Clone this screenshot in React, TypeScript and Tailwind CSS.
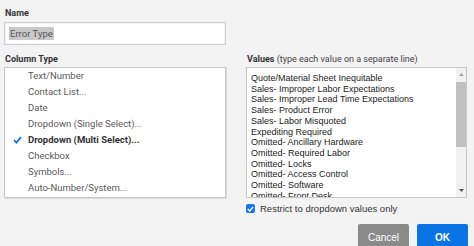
const columnTypes = [
  "Text/Number",
  "Contact List...",
  "Date",
  "Dropdown (Single Select)...",
  "Dropdown (Multi Select)...",
  "Checkbox",
  "Symbols...",
  "Auto-Number/System...",
];

const values = [
  "Quote/Material Sheet Inequitable",
  "Sales- Improper Labor Expectations",
  "Sales- Improper Lead Time Expectations",
  "Sales- Product Error",
  "Sales- Labor Misquoted",
  "Expediting Required",
  "Omitted- Ancillary Hardware",
  "Omitted- Required Labor",
  "Omitted- Locks",
  "Omitted- Access Control",
  "Omitted- Software",
  "Omitted- Front Desk",
];

const selected = "Dropdown (Multi Select)...";

export default function App() {
  return (
    <div className="w-[474px] h-[246px] overflow-hidden bg-[#f3f3f3] pl-[4px] pt-[7px] font-['Roboto',sans-serif]">
      <div className="pl-[1px] text-[9px] font-bold leading-[12px] text-[#333]">Name</div>
      <div className="mt-[3px] flex h-[23px] w-[222px] items-center border border-[#cfcfcf] bg-white pl-[4px] shadow-[inset_0_0_0_1px_#f4f4f4]">
        <span className="bg-[#c9c9c9] px-[1px] text-[9.5px] leading-[13px] text-[#555]">Error Type</span>
      </div>

      <div className="mt-[8px] flex gap-[20px]">
        {/* left column */}
        <div className="w-[222px]">
          <div className="pl-[1px] text-[9px] font-bold leading-[12px] text-[#333]">Column Type</div>
          <ul className="mt-[2px] h-[131px] border border-[#c8c8c8] bg-white shadow-[1px_1px_0_#dcdcdc]">
            {columnTypes.map((t) => {
              const on = t === selected;
              return (
                <li key={t} className="flex h-[16px] items-center text-[9.5px] leading-[16px]">
                  <span className="flex w-[23px] justify-center">
                    {on && (
                      <svg width="9" height="8" viewBox="0 0 9 8" className="ml-[1px]">
                        <path d="M1 4.2 L3.4 6.6 L8 1.2" fill="none" stroke="#1a73e8" strokeWidth="1.8" />
                      </svg>
                    )}
                  </span>
                  <span className={on ? "font-bold text-[#333]" : "text-[#5a5a5a]"}>{t}</span>
                </li>
              );
            })}
          </ul>
        </div>

        {/* right column */}
        <div className="w-[221px]">
          <div className="pl-[1px] text-[9px] leading-[12px] text-[#444]">
            <span className="font-bold text-[#333]">Values</span> (type each value on a separate line)
          </div>
          <div className="mt-[2px] flex h-[131px] border border-[#c8c8c8] bg-white">
            <div className="h-full flex-1 overflow-hidden pl-[4px] pt-[5px] font-['Liberation_Sans',Arial,sans-serif] text-[9px] leading-[10.7px] text-[#222]">
              {values.map((v) => (
                <div key={v} className="whitespace-nowrap">{v}</div>
              ))}
            </div>
            <div className="flex w-[10px] flex-col items-center bg-[#f1f1f1]">
              <div className="flex h-[12px] items-center">
                <svg width="5" height="3" viewBox="0 0 5 3"><path d="M0 3 L2.5 0 L5 3 Z" fill="#a3a3a3" /></svg>
              </div>
              <div className="mt-[2px] h-[65px] w-[10px] bg-[#c1c1c1]" />
              <div className="flex-1" />
              <div className="flex h-[14px] items-center">
                <svg width="5" height="3" viewBox="0 0 5 3"><path d="M0 0 L2.5 3 L5 0 Z" fill="#505050" /></svg>
              </div>
            </div>
          </div>

          <label className="mt-[4px] flex h-[13px] items-center gap-[5px] font-['Liberation_Sans',Arial,sans-serif] text-[9.5px] leading-[13px] text-[#333]">
            <span className="flex h-[9px] w-[9px] shrink-0 items-center justify-center rounded-[2px] bg-[#1a73e8]">
              <svg width="7" height="6" viewBox="0 0 7 6">
                <path d="M0.8 3 L2.7 4.9 L6.2 0.9" fill="none" stroke="white" strokeWidth="1.4" />
              </svg>
            </span>
            <span className="whitespace-nowrap">Restrict to dropdown values only</span>
          </label>

          <div className="mt-[9px] flex justify-end gap-[8px] font-['Liberation_Sans',Arial,sans-serif] text-[10px]">
            <button className="h-[26px] w-[51px] rounded-[2px] bg-[#8a8a8a] text-white">Cancel</button>
            <button className="mr-[-1px] h-[26px] w-[51px] rounded-[2px] bg-[#0b74e5] font-bold text-white">OK</button>
          </div>
        </div>
      </div>
    </div>
  );
}
